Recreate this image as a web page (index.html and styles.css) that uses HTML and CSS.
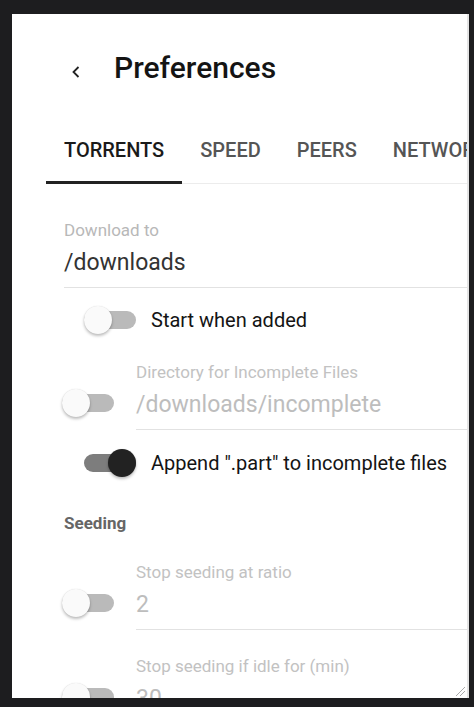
FILE: index.html
```html
<!DOCTYPE html>
<html lang="en">
<head>
    <meta charset="UTF-8">
    <meta name="viewport" content="width=device-width, initial-scale=1.0">
    <title>Preferences</title>
    <link rel="stylesheet" href="styles.css">
</head>
<body>

    <!-- Preferences dialog -->
    <div class="dialog">
        <header class="dialog-header">
            <button class="back-btn" aria-label="Back">
                <svg width="8" height="12" viewBox="0 0 8 12"><polyline points="6.5,1 1.5,6 6.5,11" fill="none" stroke="#222" stroke-width="1.8"/></svg>
            </button>
            <h1>Preferences</h1>
        </header>

        <!-- Tabs -->
        <nav class="tabs">
            <a href="#" class="tab active">Torrents</a>
            <a href="#" class="tab">Speed</a>
            <a href="#" class="tab">Peers</a>
            <a href="#" class="tab">Network</a>
        </nav>

        <div class="tab-panel">
            <div class="field field-first">
                <div class="field-label">Download to</div>
                <div class="field-value">/downloads</div>
            </div>

            <label class="switch-row row-start">
                <span class="switch"><span class="thumb"></span></span>
                <span class="switch-label">Start when added</span>
            </label>

            <div class="field-row row-incomplete">
                <span class="switch"><span class="thumb"></span></span>
                <div class="field disabled">
                    <div class="field-label">Directory for Incomplete Files</div>
                    <div class="field-value">/downloads/incomplete</div>
                </div>
            </div>

            <label class="switch-row row-append">
                <span class="switch on"><span class="thumb"></span></span>
                <span class="switch-label">Append ".part" to incomplete files</span>
            </label>

            <h2 class="section-title">Seeding</h2>

            <div class="field-row row-ratio">
                <span class="switch"><span class="thumb"></span></span>
                <div class="field disabled">
                    <div class="field-label">Stop seeding at ratio</div>
                    <div class="field-value">2</div>
                </div>
            </div>

            <div class="field-row row-idle">
                <span class="switch"><span class="thumb"></span></span>
                <div class="field disabled">
                    <div class="field-label">Stop seeding if idle for (min)</div>
                    <div class="field-value">30</div>
                </div>
            </div>
        </div>

        <!-- Resize grip -->
        <svg class="resize-grip" width="12" height="12" viewBox="0 0 12 12">
            <line x1="11" y1="2" x2="2" y2="11" stroke="#aaa" stroke-width="1"/>
            <line x1="11" y1="6" x2="6" y2="11" stroke="#aaa" stroke-width="1"/>
        </svg>
    </div>

</body>
</html>
```

FILE: styles.css
```css
/* General styles */
* {
    box-sizing: border-box;
    margin: 0;
    padding: 0;
}

html, body {
    height: 100%;
}

body {
    font-family: Roboto, "Noto Sans", Arial, sans-serif;
    background: #1d1d1f;
    padding: 14px 5px 9px 12px;
    overflow: hidden;
}

/* Dialog */
.dialog {
    position: relative;
    height: 100%;
    background: #ffffff;
    border-right: 2px solid #e4e4e4;
    overflow: hidden;
}

.dialog-header {
    display: flex;
    align-items: flex-start;
    height: 28px;
    margin-top: 40px;
    padding-left: 60px;
}

.back-btn {
    background: none;
    border: none;
    width: 8px;
    height: 12px;
    margin-top: 12px;
    cursor: pointer;
}

.back-btn svg {
    display: block;
}

.dialog-header h1 {
    margin-left: 34px;
    font-size: 30px;
    line-height: 28px;
    font-weight: 500;
    color: #141414;
}

/* Tabs */
.tabs {
    display: flex;
    margin-top: 38px;
    margin-left: 34px;
    border-bottom: 1px solid #ececec;
    white-space: nowrap;
}

.tab {
    flex-shrink: 0;
    padding: 0 18px;
    height: 64px;
    line-height: 60px;
    margin-bottom: -1px;
    border-bottom: 3px solid transparent;
    font-size: 20px;
    font-weight: 500;
    text-transform: uppercase;
    text-decoration: none;
    color: #555555;
}

.tab.active {
    color: #1a1a1a;
    border-bottom-color: #222222;
}

/* Tab content */
.tab-panel {
    padding-left: 52px;
}

.field {
    flex: 1;
    padding-bottom: 10px;
    border-bottom: 1px solid #e2e2e2;
}

.field-first {
    padding-top: 36px;
}

.field-label {
    font-size: 17px;
    line-height: 20px;
    color: #b8b8b8;
}

.field-value {
    margin-top: 9px;
    font-size: 23px;
    line-height: 28px;
    color: #333333;
}

.field.disabled .field-value {
    color: #bdbdbd;
}

.field.disabled .field-label {
    color: #c2c2c2;
}

/* Switch rows */
.switch-row {
    display: flex;
    align-items: center;
    height: 48px;
    cursor: pointer;
}

.switch-row .switch {
    margin-left: 20px;
}

.switch-label {
    margin-left: 15px;
    font-size: 20px;
    color: #141414;
}

.row-start {
    margin-top: 8px;
}

.row-append {
    margin-top: 9px;
}

.field-row {
    display: flex;
    align-items: flex-end;
}

.field-row .switch {
    margin-left: -2px;
    margin-right: 22px;
    margin-bottom: 13px;
}

.row-incomplete {
    margin-top: 18px;
}

.row-ratio {
    margin-top: 29px;
}

.row-idle {
    margin-top: 26px;
}

.section-title {
    margin-top: 26px;
    font-size: 17px;
    line-height: 20px;
    font-weight: 700;
    color: #666666;
}

/* Toggle switch */
.switch {
    position: relative;
    flex-shrink: 0;
    width: 52px;
    height: 28px;
}

.switch::before {
    content: "";
    position: absolute;
    left: 0;
    right: 0;
    top: 5px;
    height: 18px;
    border-radius: 9px;
    background: #bababa;
}

.thumb {
    position: absolute;
    top: 0;
    left: 0;
    width: 28px;
    height: 28px;
    border-radius: 50%;
    background: #fafafa;
    box-shadow: 0 2px 3px rgba(0, 0, 0, 0.25), 0 0 1px rgba(0, 0, 0, 0.15);
}

.switch.on::before {
    background: #7d7d7d;
}

.switch.on .thumb {
    left: 24px;
    background: #222222;
}

.resize-grip {
    position: absolute;
    right: 1px;
    bottom: 1px;
}
```
